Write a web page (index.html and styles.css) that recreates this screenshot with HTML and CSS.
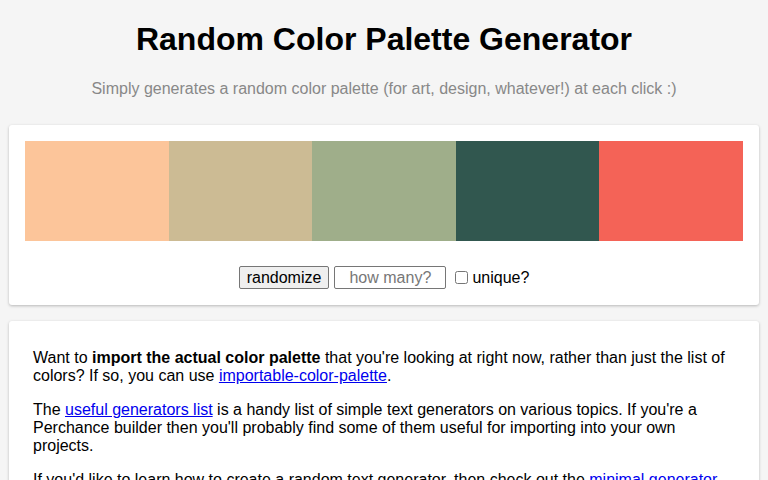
FILE: index.html
```html
<!DOCTYPE html>
<html>
<head>
<meta charset="utf-8">
<link rel="stylesheet" href="styles.css">
</head>
<body>
<h1 class="title">Random Color Palette Generator</h1>
<p class="subtitle">Simply generates a random color palette (for art, design, whatever!) at each click :)</p>
<div class="card palette-card">
  <div class="palette">
    <div class="swatch sw1"></div>
    <div class="swatch sw2"></div>
    <div class="swatch sw3"></div>
    <div class="swatch sw4"></div>
    <div class="swatch sw5"></div>
  </div>
  <div class="controls">
    <button class="btn">randomize</button>
    <input class="count" type="text" placeholder="how many?">
    <label class="unique"><input type="checkbox" class="chk">unique?</label>
  </div>
</div>
<div class="card info-card">
  <p>Want to <b>import the actual color palette</b> that you're looking at right now, rather than just the list of colors? If so, you can use <a href="#">importable-color-palette</a>.</p>
  <p>The <a href="#">useful generators list</a> is a handy list of simple text generators on various topics. If you're a Perchance builder then you'll probably find some of them useful for importing into your own projects.</p>
  <p>If you'd like to learn how to create a random text generator, then check out the <a href="#">minimal generator</a> example and the tutorial.</p>
</div>
</body>
</html>
```
FILE: styles.css
```css
html, body {
  margin: 0;
  padding: 0;
}
body {
  background: #f5f5f5;
  font-family: "Liberation Sans", Arial, sans-serif;
  font-size: 16px;
  color: #000;
  overflow: hidden;
}
.title {
  margin: 21px 0 0;
  font-size: 32px;
  font-weight: bold;
  text-align: center;
  line-height: 37px;
}
.subtitle {
  margin: 22px 0 0;
  text-align: center;
  color: #888;
  line-height: 18px;
}
.card {
  background: #fff;
  margin: 0 9px;
  border-radius: 3px;
  box-shadow: 0 1px 3px rgba(0,0,0,0.25);
}
.palette-card {
  margin-top: 27px;
  padding: 16px 16px 16px;
}
.palette {
  display: flex;
  height: 100px;
}
.swatch {
  flex: 1;
}
.sw1 { background: #fcc59a; }
.sw2 { background: #ccbb94; }
.sw3 { background: #9fae8a; }
.sw4 { background: #31574f; }
.sw5 { background: #f46357; }
.controls {
  margin-top: 25px;
  display: flex;
  justify-content: center;
  align-items: center;
  gap: 5px;
}
.btn {
  font-family: "Liberation Sans", Arial, sans-serif;
  font-size: 16px;
  height: 23px;
  padding: 0 7px;
  background: #efefef;
  border: 1px solid #767676;
  border-radius: 2px;
  color: #000;
}
.count {
  font-family: "Liberation Sans", Arial, sans-serif;
  font-size: 16px;
  width: 112px;
  height: 23px;
  box-sizing: border-box;
  border: 1px solid #767676;
  border-radius: 2px;
  text-align: center;
  padding: 0;
}
.count::placeholder {
  color: #777;
}
.unique {
  display: flex;
  align-items: center;
  margin-left: 4px;
}
.chk {
  margin: 0 4px 0 0;
  width: 13px;
  height: 13px;
}
.info-card {
  margin-top: 16px;
  padding: 12px 24px 10px;
}
.info-card p {
  margin: 16px 0;
  line-height: 18px;
}
.info-card a {
  color: #0000ee;
}
```
